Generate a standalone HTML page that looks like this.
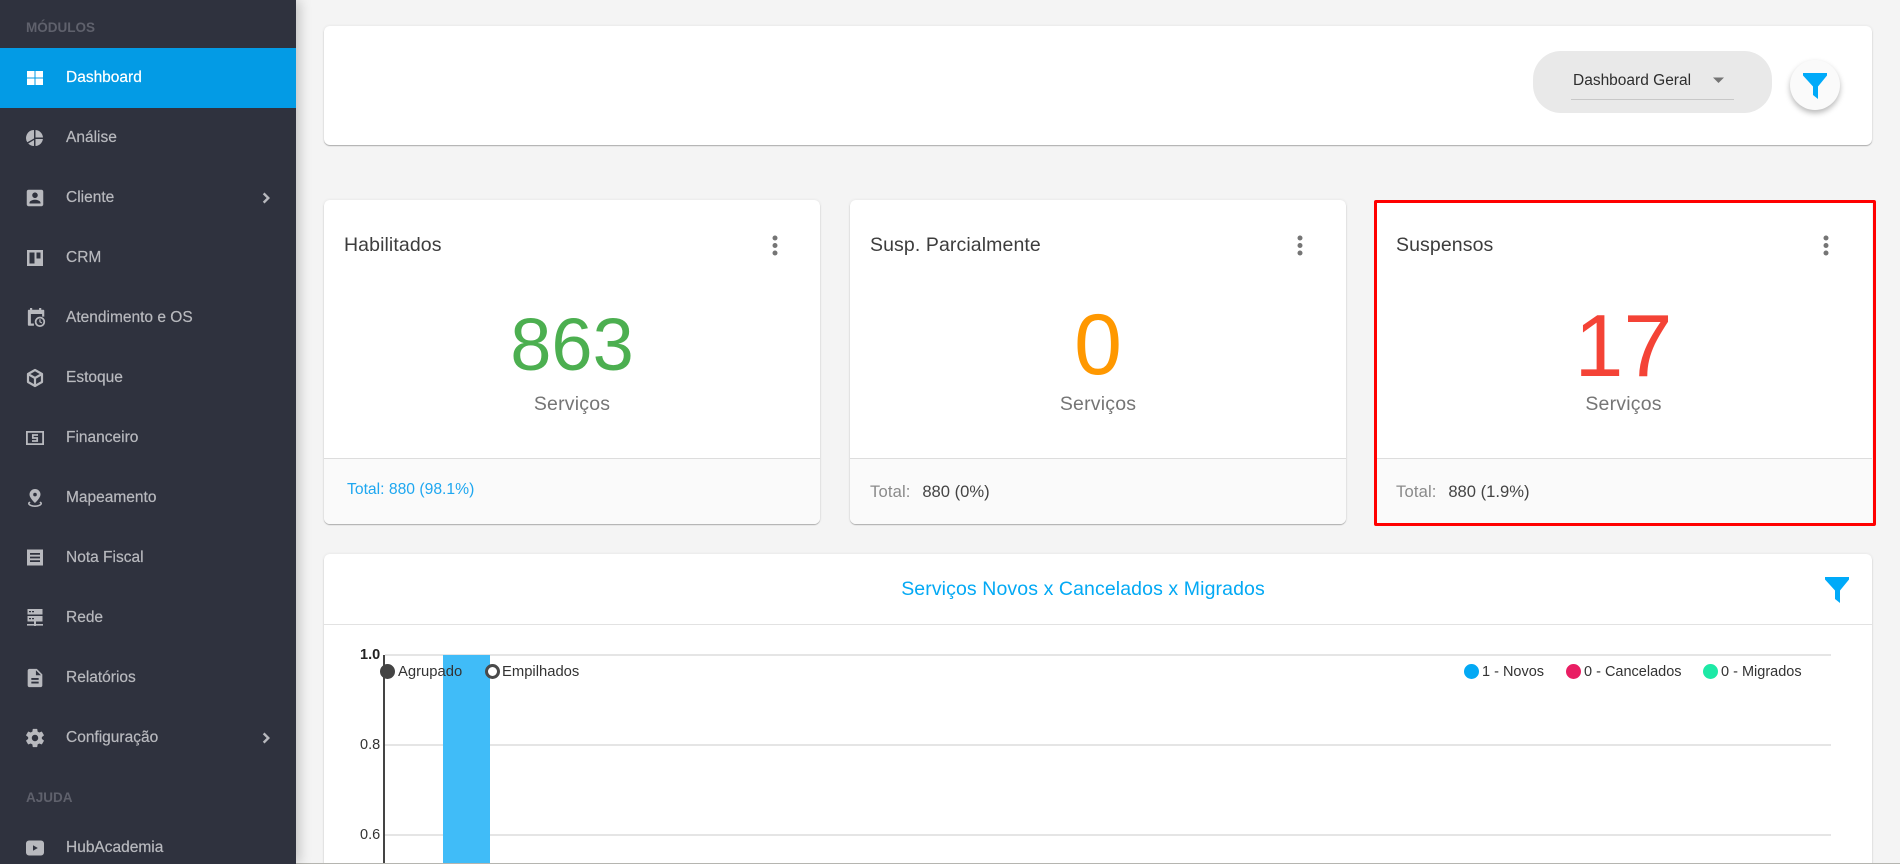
<!DOCTYPE html>
<html lang="pt"><head><meta charset="utf-8"><title>Dashboard</title>
<style>
*{box-sizing:border-box}
html,body{margin:0;padding:0;width:1900px;height:864px;overflow:hidden;background:#f4f4f4;font-family:"Liberation Sans",sans-serif}
#root{position:relative;width:1900px;height:864px;overflow:hidden}
.a{position:absolute;white-space:nowrap}
#side{position:absolute;left:0;top:0;width:296px;height:864px;background:#2f323e;box-shadow:3px 0 12px rgba(0,0,0,.22)}
.nav{position:absolute;left:66px;font-size:15.5px;line-height:20px;color:#b8b9be;-webkit-text-stroke:.2px;white-space:nowrap}
.lab{position:absolute;left:26px;font-size:13.5px;line-height:18px;font-weight:bold;color:#5f616c;white-space:nowrap}
.ic{position:absolute;left:24px;width:22px;height:22px;fill:#b8b9be}
.card{position:absolute;background:#fff;border-radius:6px;box-shadow:0 1px 1px rgba(0,0,0,.28),0 0 3px rgba(0,0,0,.08)}
.title{position:absolute;left:20px;top:33px;font-size:19.5px;line-height:24px;letter-spacing:.1px;color:#3d3d3d;white-space:nowrap}
.keb{position:absolute;top:35px;width:6px;height:22px}
.num{position:absolute;left:0;width:100%;text-align:center;white-space:nowrap}
.sv{position:absolute;left:0;width:100%;top:192px;text-align:center;font-size:19.5px;line-height:24px;letter-spacing:.2px;color:#757575}
.foot{position:absolute;left:0;right:0;top:258px;height:66px;background:#fafafa;border-top:1px solid #ddd;border-radius:0 0 6px 6px}
.tt{position:absolute;left:20px;top:22px;font-size:16.6px;line-height:22px;color:#8a8a8a;white-space:nowrap;letter-spacing:.15px}
.tt b{font-weight:normal;color:#444;margin-left:7px;letter-spacing:0}
.cl{position:absolute;font-size:14.5px;line-height:18px;color:#333;white-space:nowrap}
.dot{position:absolute;width:15px;height:15px;border-radius:50%;top:663px}
.grid{position:absolute;left:385px;width:1446px;height:2px;background:#e5e5e5}
</style></head><body><div id="root">

<div class="card" style="left:324px;top:26px;width:1548px;height:119px"></div>
<div class="a" style="left:1533px;top:51px;width:239px;height:62px;border-radius:28px;background:#e9e9e9"></div>
<div class="a" style="left:1573px;top:71px;font-size:15.5px;line-height:20px;color:#2e2e2e">Dashboard Geral</div>
<svg class="a" style="left:1712px;top:77px" width="13" height="7" viewBox="0 0 13 7"><path d="M1 .5h11L6.500 6z" fill="#757575"/></svg>
<div class="a" style="left:1571px;top:99px;width:163px;height:1px;background:#c8c8c8"></div>
<div class="a" style="left:1790px;top:60px;width:50px;height:50px;border-radius:50%;background:#fafafa;box-shadow:0 3px 6px rgba(0,0,0,.28)"></div>
<svg class="a" style="left:1803px;top:73px" width="24" height="26" viewBox="0 0 24 26"><path d="M0 0h24v2.500l-9 11V26l-5-4V13.500L0 2.500z" fill="#00aaf9"/></svg>

<!-- card 1 -->
<div class="card" style="left:324px;top:200px;width:496px;height:324px">
  <div class="title">Habilitados</div>
  <svg class="keb" style="left:448px" viewBox="0 0 6 22"><circle cx="3" cy="3" r="2.500" fill="#757575"/><circle cx="3" cy="10.500" r="2.500" fill="#757575"/><circle cx="3" cy="18" r="2.500" fill="#757575"/></svg>
  <div class="num" style="top:100px;font-size:74px;line-height:90px;color:#4caf50">863</div>
  <div class="sv">Serviços</div>
  <div class="foot"><div class="tt" style="left:23px;top:20px;font-size:15.7px;color:#1ea7f0;letter-spacing:0">Total: 880 (98.1%)</div></div>
</div>
<!-- card 2 -->
<div class="card" style="left:850px;top:200px;width:496px;height:324px">
  <div class="title">Susp. Parcialmente</div>
  <svg class="keb" style="left:447px" viewBox="0 0 6 22"><circle cx="3" cy="3" r="2.500" fill="#757575"/><circle cx="3" cy="10.500" r="2.500" fill="#757575"/><circle cx="3" cy="18" r="2.500" fill="#757575"/></svg>
  <div class="num" style="top:93px;font-size:86px;line-height:105px;color:#ff9800">0</div>
  <div class="sv">Serviços</div>
  <div class="foot"><div class="tt">Total: <b>880 (0%)</b></div></div>
</div>
<!-- card 3 -->
<div class="card" style="left:1375px;top:200px;width:497px;height:324px;box-shadow:none">
  <div class="title" style="left:21px">Suspensos</div>
  <svg class="keb" style="left:448px" viewBox="0 0 6 22"><circle cx="3" cy="3" r="2.500" fill="#757575"/><circle cx="3" cy="10.500" r="2.500" fill="#757575"/><circle cx="3" cy="18" r="2.500" fill="#757575"/></svg>
  <div class="num" style="top:93px;font-size:88px;line-height:105px;color:#f44336">17</div>
  <div class="sv">Serviços</div>
  <div class="foot"><div class="tt" style="left:21px">Total: <b>880 (1.9%)</b></div></div>
</div>
<div class="a" style="left:1374px;top:200px;width:502px;height:326px;border:3px solid #f00;border-radius:2px"></div>

<!-- chart card -->
<div class="card" style="left:324px;top:554px;width:1548px;height:320px"></div>
<div class="a" style="left:324px;top:624px;width:1548px;height:1px;background:#e2e2e2"></div>
<div class="a" style="left:824px;top:577px;width:518px;text-align:center;font-size:19.5px;line-height:24px;letter-spacing:.1px;color:#03a9f4">Serviços Novos x Cancelados x Migrados</div>
<svg class="a" style="left:1825px;top:577px" width="24" height="26" viewBox="0 0 24 26"><path d="M0 0h24v2.500l-9 11V26l-5-4V13.500L0 2.500z" fill="#00aaf9"/></svg>

<div class="grid" style="top:654px"></div>
<div class="grid" style="top:744px"></div>
<div class="grid" style="top:834px"></div>
<div class="a" style="left:383px;top:655px;width:2px;height:209px;background:#444"></div>
<div class="a" style="left:443px;top:655px;width:47px;height:209px;background:#40bcf8"></div>
<div class="cl" style="left:360px;top:646px;font-weight:bold;color:#222">1.0</div>
<div class="cl" style="left:360px;top:736px">0.8</div>
<div class="cl" style="left:360px;top:826px">0.6</div>
<div class="a" style="left:380px;top:664px;width:15px;height:15px;border-radius:50%;background:#444"></div>
<div class="cl" style="left:398px;top:662.500px;font-size:14.800px">Agrupado</div>
<div class="a" style="left:484.500px;top:664px;width:15px;height:15px;border-radius:50%;border:3px solid #4a4a4a;background:#fff"></div>
<div class="cl" style="left:502px;top:662.500px;font-size:14.800px">Empilhados</div>
<div class="dot" style="left:1464px;top:664px;background:#03a9f4"></div>
<div class="cl" style="left:1482px;top:662.500px">1 - Novos</div>
<div class="dot" style="left:1566px;top:664px;background:#e91e63"></div>
<div class="cl" style="left:1584px;top:662.500px">0 - Cancelados</div>
<div class="dot" style="left:1703px;top:664px;background:#1de9a6"></div>
<div class="cl" style="left:1721px;top:662.500px">0 - Migrados</div>

<div class="a" style="left:0;top:863px;width:1900px;height:1px;background:#b5b5b0"></div>

<!-- sidebar -->
<div id="side">
  <div class="a" style="left:0;top:48px;width:296px;height:60px;background:#039be5"></div>
  <div class="lab" style="top:19px">MÓDULOS</div>
  <div class="lab" style="top:789px">AJUDA</div>

  <svg class="ic" style="top:67px;fill:#fff" viewBox="0 0 22 22"><path d="M3 4h7.500v6.500H3zM11.500 4H19v6.500h-7.500zM3 11.500h7.500V18H3zM11.500 11.500H19V18h-7.500z"/></svg>
  <div class="nav" style="top:68px;color:#fff">Dashboard</div>

  <svg class="ic" style="top:127px" viewBox="0 0 22 22"><path d="M10 3a8 8 0 0 0-6.700 12.300L10 11.500zM11.500 3v7.500H19A8 8 0 0 0 11.500 3zM4.200 16.500A8 8 0 0 0 10 19v-6zM11.500 12v7a8 8 0 0 0 7.400-7z"/></svg>
  <div class="nav" style="top:128px">Análise</div>

  <svg class="ic" style="top:187px" viewBox="0 0 24 24"><path d="M3 5v14c0 1.100.89 2 2 2h14c1.100 0 2-.9 2-2V5c0-1.100-.9-2-2-2H5c-1.110 0-2 .9-2 2zm12 4c0 1.660-1.340 3-3 3s-3-1.340-3-3 1.340-3 3-3 3 1.340 3 3zm-9 8c0-2 4-3.100 6-3.100s6 1.100 6 3.100v1H6v-1z"/></svg>
  <div class="nav" style="top:188px">Cliente</div>
  <svg class="a" style="left:261px;top:189px;fill:#b8b9be" width="12" height="18" viewBox="0 0 12 18"><path d="M3.500 3.500L1.800 5.200 5.600 9l-3.800 3.800 1.700 1.700L9 9z"/></svg>

  <svg class="ic" style="top:247px" viewBox="0 0 22 22"><path fill-rule="evenodd" d="M3 3h16v16H3zM5.500 5.500v11h5v-11zM12.500 5.500v6h4v-6z"/></svg>
  <div class="nav" style="top:248px">CRM</div>

  <svg class="ic" style="left:27px;top:308px;width:19px;height:19px" viewBox="0 0 22 22"><path fill-rule="evenodd" d="M3.500 0h2.500v2h8V0h2.500v2H19a1 1 0 0 1 1 1v7h-2.500V7h-13v11H8v2.500H2a1 1 0 0 1-1-1V3a1 1 0 0 1 1-1h1.500z"/><path fill-rule="evenodd" d="M15 10a6 6 0 1 0 0 12 6 6 0 0 0 0-12zm0 2a4 4 0 1 1 0 8 4 4 0 0 1 0-8zM14.300 13v3.400l2.600 1.500.7-1.100-1.900-1.100V13z"/></svg>
  <div class="nav" style="top:308px">Atendimento e OS</div>

  <svg class="ic" style="top:367px;fill:none" viewBox="0 0 22 22"><path fill="none" stroke="#b8b9be" stroke-width="2.200" stroke-linejoin="round" d="M11 3l7 4v8l-7 4-7-4V7zM4 7l7 4 7-4M11 11v8"/></svg>
  <div class="nav" style="top:368px">Estoque</div>

  <svg class="ic" style="top:427px" viewBox="0 0 22 22"><path fill-rule="evenodd" d="M2 4h18v14H2zM3.800 5.800v10.400h14.400V5.800z"/><path fill="none" stroke="#b8b9be" stroke-width="1.700" d="M14 8H8.800v3H13.200v3H8"/></svg>
  <div class="nav" style="top:428px">Financeiro</div>

  <svg class="ic" style="top:487px" viewBox="0 0 22 22"><path fill-rule="evenodd" d="M11 2a5.500 5.500 0 0 0-5.500 5.500C5.500 11 11 16 11 16s5.500-5 5.500-8.500A5.500 5.500 0 0 0 11 2zm0 3.800a1.800 1.800 0 1 1 0 3.600 1.800 1.800 0 0 1 0-3.600z"/><path d="M5.500 14.500C4.300 15.100 4 15.800 4 16.500 4 18.500 7.500 20 11 20s7-1.500 7-3.500c0-.7-.3-1.400-1.500-2l-1.100 1.300c.7.300 1 .5 1 .7 0 .6-2.200 1.900-5.400 1.900s-5.400-1.300-5.400-1.900c0-.2.300-.4 1-.7z"/></svg>
  <div class="nav" style="top:488px">Mapeamento</div>

  <svg class="ic" style="top:546px" viewBox="0 0 22 22"><path fill-rule="evenodd" d="M3 3.500h16v16H3zM6 7v1.800h10V7zM6 10.600v1.800h10v-1.800zM6 14.200V16h10v-1.800z"/></svg>
  <div class="nav" style="top:548px">Nota Fiscal</div>

  <svg class="ic" style="top:606px" viewBox="0 0 22 22"><path fill-rule="evenodd" d="M3.500 3h15v5.500h-15zM5 5v1.300h2V5zM8 5v1.300h2V5zM3.500 10h15v5.500h-15zM5 12v1.300h2V12zM8 12v1.300h2V12zM10 15.500h2v2.500h7v1.600h-7V20h-2v-.4H3V18h7z"/></svg>
  <div class="nav" style="top:608px">Rede</div>

  <svg class="ic" style="top:667px" viewBox="0 0 24 24"><path d="M14 2H6c-1.100 0-1.990.9-1.990 2L4 20c0 1.100.89 2 1.990 2H18c1.100 0 2-.9 2-2V8l-6-6zm2 16H8v-2h8v2zm0-4H8v-2h8v2zm-3-5V3.500L18.500 9H13z"/></svg>
  <div class="nav" style="top:668px">Relatórios</div>

  <svg class="ic" style="top:727px" viewBox="0 0 24 24"><path d="M19.430 12.980c.04-.32.07-.64.07-.98s-.03-.66-.07-.98l2.110-1.650c.19-.15.24-.42.12-.64l-2-3.460c-.12-.22-.39-.3-.61-.22l-2.490 1c-.52-.4-1.080-.73-1.690-.98l-.38-2.650C14.460 2.180 14.250 2 14 2h-4c-.25 0-.46.18-.49.42l-.38 2.650c-.61.25-1.170.59-1.690.98l-2.490-1c-.23-.09-.49 0-.61.22l-2 3.460c-.13.22-.07.49.12.64l2.110 1.650c-.04.32-.07.65-.07.98s.03.66.07.98l-2.110 1.650c-.19.15-.24.42-.12.64l2 3.460c.12.22.39.3.61.22l2.490-1c.52.4 1.080.73 1.690.98l.38 2.650c.03.24.24.42.49.42h4c.25 0 .46-.18.49-.42l.38-2.650c.61-.25 1.170-.59 1.690-.98l2.490 1c.23.09.49 0 .61-.22l2-3.460c.12-.22.07-.49-.12-.64l-2.110-1.650zM12 15.500c-1.930 0-3.500-1.570-3.500-3.500s1.570-3.500 3.500-3.500 3.500 1.570 3.500 3.500-1.570 3.500-3.500 3.500z"/></svg>
  <div class="nav" style="top:728px">Configuração</div>
  <svg class="a" style="left:261px;top:729px;fill:#b8b9be" width="12" height="18" viewBox="0 0 12 18"><path d="M3.500 3.500L1.800 5.200 5.600 9l-3.800 3.800 1.700 1.700L9 9z"/></svg>

  <svg class="ic" style="top:837px" viewBox="0 0 22 22"><path fill-rule="evenodd" d="M5 3.500h12a3 3 0 0 1 3 3v9a3 3 0 0 1-3 3H5a3 3 0 0 1-3-3v-9a3 3 0 0 1 3-3zM9 8.200v5.600l4.800-2.800z"/></svg>
  <div class="nav" style="top:838px">HubAcademia</div>
</div>
</div></body></html>
